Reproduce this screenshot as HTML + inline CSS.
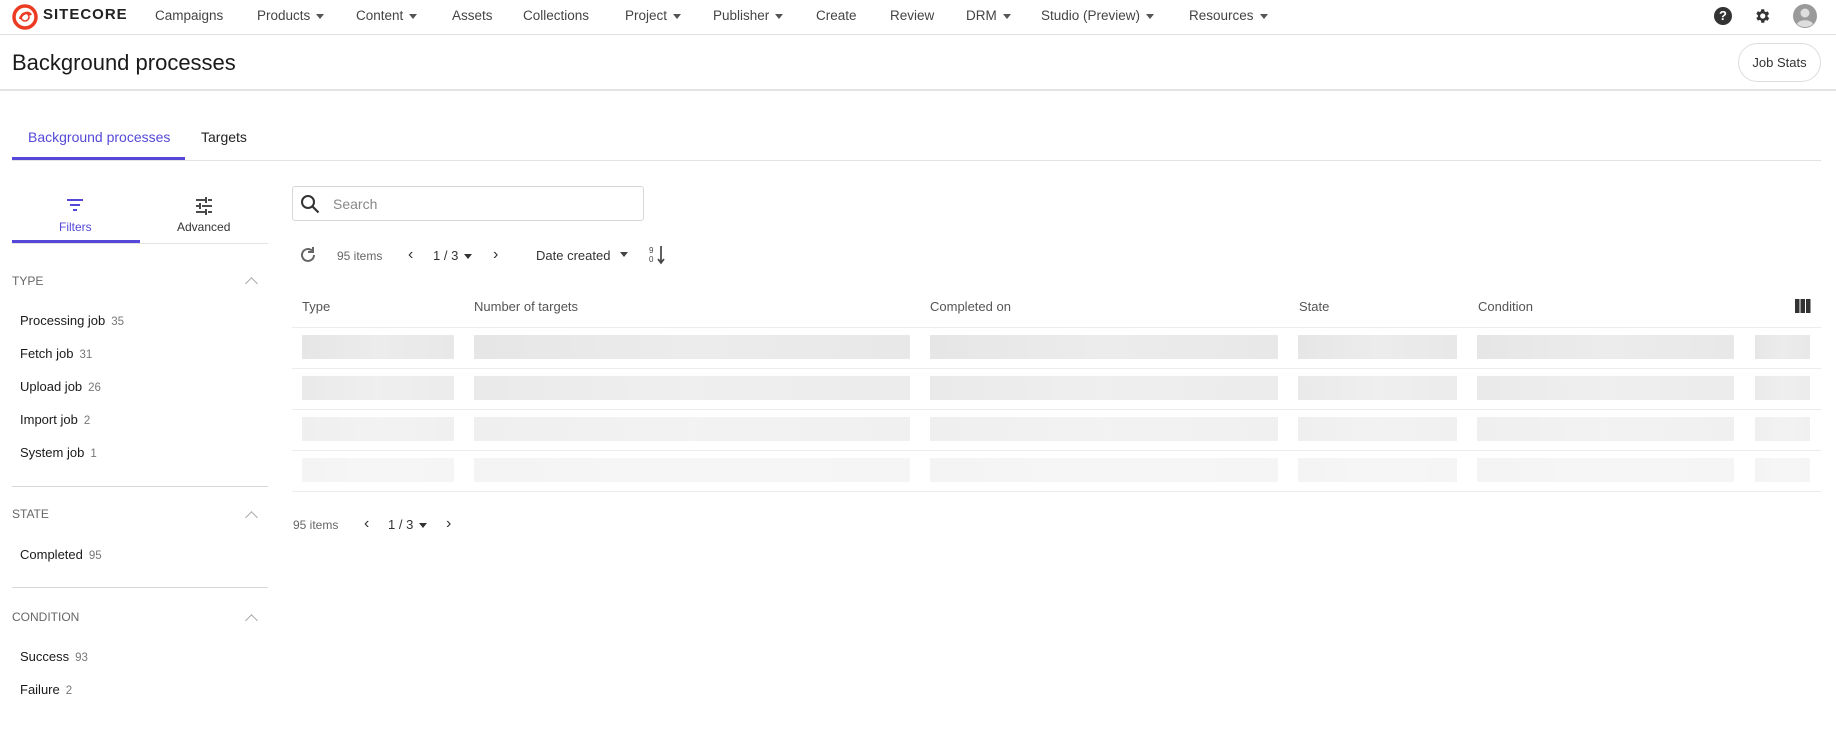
<!DOCTYPE html>
<html><head><meta charset="utf-8"><style>
*{box-sizing:border-box;margin:0;padding:0}
body{width:1836px;height:750px;overflow:hidden;background:#fff;font-family:"Liberation Sans",Arial,sans-serif;color:#222;position:relative}
.a{position:absolute;white-space:nowrap;line-height:20px}
.nav{font-size:13.5px;color:#444}
.car{display:inline-block;width:0;height:0;border-left:4px solid transparent;border-right:4px solid transparent;border-top:5px solid #555;margin-left:6px;vertical-align:middle}
.hl{position:absolute;height:1px;background:#e2e2e2}
.fi{font-size:13px;color:#1a1a1a}
.fi span{font-size:11.5px;color:#777;margin-left:6px}
.sh{font-size:12px;color:#666}
.chev{position:absolute;width:9px;height:9px;border-left:1.5px solid #aaa;border-top:1.5px solid #aaa;transform:rotate(45deg)}
.th{font-size:13px;color:#555}
.bar{position:absolute;height:24px;background:linear-gradient(90deg,#e6e6e6,#ececec 50%,#e8e8e8)}
.sm{font-size:12px;color:#666}
</style></head><body>
<svg style="position:absolute;left:12px;top:4px" width="26" height="26" viewBox="0 0 26 26"><circle cx="13" cy="13" r="11" fill="none" stroke="#eb3c23" stroke-width="3.5"/><path d="M8 15c2-6 8-8 11-4" fill="none" stroke="#eb3c23" stroke-width="2.5"/><circle cx="13" cy="13" r="4" fill="none" stroke="#eb3c23" stroke-width="1.5"/></svg>
<div class="a" style="left:43px;top:5px;font-size:15px;font-weight:bold;letter-spacing:1px;color:#222">SITECORE</div>
<div class="a nav" style="left:155px;top:6px">Campaigns</div>
<div class="a nav" style="left:257px;top:6px">Products<i class="car"></i></div>
<div class="a nav" style="left:356px;top:6px">Content<i class="car"></i></div>
<div class="a nav" style="left:452px;top:6px">Assets</div>
<div class="a nav" style="left:523px;top:6px">Collections</div>
<div class="a nav" style="left:625px;top:6px">Project<i class="car"></i></div>
<div class="a nav" style="left:713px;top:6px">Publisher<i class="car"></i></div>
<div class="a nav" style="left:816px;top:6px">Create</div>
<div class="a nav" style="left:890px;top:6px">Review</div>
<div class="a nav" style="left:966px;top:6px">DRM<i class="car"></i></div>
<div class="a nav" style="left:1041px;top:6px">Studio (Preview)<i class="car"></i></div>
<div class="a nav" style="left:1189px;top:6px">Resources<i class="car"></i></div>
<div style="position:absolute;left:1714px;top:7px;width:18px;height:18px;border-radius:50%;background:#333;color:#fff;font-size:13px;font-weight:bold;text-align:center;line-height:18px">?</div>
<svg style="position:absolute;left:1753px;top:7px" width="18" height="18" viewBox="0 0 24 24"><path fill="#333" d="M19.4 13a7.5 7.5 0 0 0 0-2l2.1-1.6-2-3.5-2.5 1a7 7 0 0 0-1.7-1L15 3h-4l-.4 2.7a7 7 0 0 0-1.7 1l-2.5-1-2 3.5L6.6 11a7.5 7.5 0 0 0 0 2l-2.1 1.6 2 3.5 2.5-1a7 7 0 0 0 1.7 1L11 21h4l.4-2.7a7 7 0 0 0 1.7-1l2.5 1 2-3.5zM13 15.5A3.5 3.5 0 1 1 13 8.5a3.5 3.5 0 0 1 0 7z"/></svg>
<svg style="position:absolute;left:1793px;top:4px" width="24" height="24" viewBox="0 0 24 24"><circle cx="12" cy="12" r="12" fill="#9a9a9a"/><circle cx="12" cy="9" r="4.5" fill="#ddd"/><path d="M4 20c2-5 14-5 16 0a12 12 0 0 1-16 0z" fill="#ddd"/></svg>
<div class="hl" style="left:0;top:34px;width:1836px;background:#e0e0e0"></div>
<div class="a" style="left:12px;top:49px;font-size:22px;line-height:28px;color:#1a1a1a">Background processes</div>
<div style="position:absolute;left:1738px;top:43px;width:83px;height:39px;border:1px solid #ddd;border-radius:20px;font-size:13px;color:#333;text-align:center;line-height:37px">Job Stats</div>
<div style="position:absolute;left:0;top:89px;width:1836px;height:2px;background:#e4e4e4"></div>
<div class="a" style="left:28px;top:127px;font-size:14px;color:#5548d9">Background processes</div>
<div class="a" style="left:201px;top:127px;font-size:14px;color:#222">Targets</div>
<div class="hl" style="left:12px;top:160px;width:1809px"></div>
<div style="position:absolute;left:12px;top:157px;width:173px;height:3px;background:#5548d9"></div>
<svg style="position:absolute;left:66px;top:198px" width="18" height="16" viewBox="0 0 18 16"><path d="M1 2h16M4 7h10M7 12h4" stroke="#5548d9" stroke-width="2"/></svg>
<div class="a" style="left:59px;top:217px;font-size:12px;color:#5548d9">Filters</div>
<svg style="position:absolute;left:195px;top:197px" width="18" height="18" viewBox="0 0 18 18"><path d="M1 3h9M13 3h4M11 0v6M1 9h3M7 9h10M5 6v6M1 15h9M13 15h4M11 12v6" stroke="#333" stroke-width="1.8" fill="none"/></svg>
<div class="a" style="left:177px;top:217px;font-size:12px;color:#333">Advanced</div>
<div class="hl" style="left:12px;top:243px;width:256px"></div>
<div style="position:absolute;left:12px;top:240px;width:128px;height:3px;background:#5548d9"></div>
<div class="a sh" style="left:12px;top:271px">TYPE</div><div class="chev" style="left:247px;top:279px"></div>
<div class="a fi" style="left:20px;top:311px">Processing job<span>35</span></div>
<div class="a fi" style="left:20px;top:344px">Fetch job<span>31</span></div>
<div class="a fi" style="left:20px;top:377px">Upload job<span>26</span></div>
<div class="a fi" style="left:20px;top:410px">Import job<span>2</span></div>
<div class="a fi" style="left:20px;top:443px">System job<span>1</span></div>
<div class="hl" style="left:12px;top:486px;width:256px;background:#d8d8d8"></div>
<div class="a sh" style="left:12px;top:504px">STATE</div><div class="chev" style="left:247px;top:513px"></div>
<div class="a fi" style="left:20px;top:545px">Completed<span>95</span></div>
<div class="hl" style="left:12px;top:587px;width:256px;background:#d8d8d8"></div>
<div class="a sh" style="left:12px;top:607px">CONDITION</div><div class="chev" style="left:247px;top:616px"></div>
<div class="a fi" style="left:20px;top:647px">Success<span>93</span></div>
<div class="a fi" style="left:20px;top:680px">Failure<span>2</span></div>
<div style="position:absolute;left:292px;top:186px;width:352px;height:35px;border:1px solid #d8d8d8;border-radius:3px"></div>
<svg style="position:absolute;left:300px;top:194px" width="20" height="20" viewBox="0 0 20 20"><circle cx="8" cy="8" r="6" fill="none" stroke="#333" stroke-width="2"/><path d="M12.5 12.5l6 6" stroke="#333" stroke-width="2.2"/></svg>
<div class="a" style="left:333px;top:194px;font-size:14px;color:#888">Search</div>
<svg style="position:absolute;left:299px;top:246px" width="18" height="18" viewBox="0 0 18 18"><path d="M15 9a6 6 0 1 1-2-4.5" fill="none" stroke="#666" stroke-width="2"/><path d="M14 1v5h-5" fill="none" stroke="#666" stroke-width="2"/></svg>
<div class="a sm" style="left:337px;top:246px">95 items</div>
<div class="a" style="left:408px;top:245px;font-size:16px;color:#333">‹</div>
<div class="a" style="left:433px;top:246px;font-size:13px;color:#333">1 / 3<i class="car" style="border-top-color:#333"></i></div>
<div class="a" style="left:493px;top:245px;font-size:16px;color:#333">›</div>
<div class="a" style="left:536px;top:246px;font-size:13px;color:#333">Date created</div>
<i class="car" style="position:absolute;left:614px;top:252px;border-top-color:#444"></i>
<svg style="position:absolute;left:649px;top:245px" width="18" height="20" viewBox="0 0 18 20"><text x="0" y="8" font-size="8" font-family="Liberation Sans" fill="#444">9</text><text x="0" y="17" font-size="8" font-family="Liberation Sans" fill="#444">0</text><path d="M12 1v16M9 14l3 4 3-4" fill="none" stroke="#444" stroke-width="1.7"/></svg>
<div class="a th" style="left:302px;top:297px">Type</div>
<div class="a th" style="left:474px;top:297px">Number of targets</div>
<div class="a th" style="left:930px;top:297px">Completed on</div>
<div class="a th" style="left:1299px;top:297px">State</div>
<div class="a th" style="left:1478px;top:297px">Condition</div>
<svg style="position:absolute;left:1795px;top:299px" width="16" height="14"><rect x="0" y="0" width="4.5" height="14" fill="#333"/><rect x="5.5" y="0" width="4.5" height="14" fill="#333"/><rect x="11" y="0" width="4.5" height="14" fill="#333"/></svg>
<div class="hl" style="left:292px;top:327px;width:1529px;background:#ececec"></div>
<div class="hl" style="left:292px;top:368px;width:1529px;background:#ececec"></div>
<div class="hl" style="left:292px;top:409px;width:1529px;background:#ececec"></div>
<div class="hl" style="left:292px;top:450px;width:1529px;background:#ececec"></div>
<div class="hl" style="left:292px;top:491px;width:1529px;background:#ececec"></div>
<div class="a sm" style="left:293px;top:515px">95 items</div>
<div class="a" style="left:364px;top:514px;font-size:16px;color:#333">‹</div>
<div class="a" style="left:388px;top:515px;font-size:13px;color:#333">1 / 3<i class="car" style="border-top-color:#333"></i></div>
<div class="a" style="left:446px;top:514px;font-size:16px;color:#333">›</div>
<style>
.r1{top:335px;opacity:1}.r2{top:376px;opacity:.85}.r3{top:417px;opacity:.65}.r4{top:458px;opacity:.45}
.c1{left:302px;width:152px}.c2{left:474px;width:436px}.c3{left:930px;width:348px}.c4{left:1298px;width:159px}.c5{left:1477px;width:257px}.c6{left:1755px;width:55px}
</style>
<div class="bar r1 c1"></div><div class="bar r1 c2"></div><div class="bar r1 c3"></div><div class="bar r1 c4"></div><div class="bar r1 c5"></div><div class="bar r1 c6"></div>
<div class="bar r2 c1"></div><div class="bar r2 c2"></div><div class="bar r2 c3"></div><div class="bar r2 c4"></div><div class="bar r2 c5"></div><div class="bar r2 c6"></div>
<div class="bar r3 c1"></div><div class="bar r3 c2"></div><div class="bar r3 c3"></div><div class="bar r3 c4"></div><div class="bar r3 c5"></div><div class="bar r3 c6"></div>
<div class="bar r4 c1"></div><div class="bar r4 c2"></div><div class="bar r4 c3"></div><div class="bar r4 c4"></div><div class="bar r4 c5"></div><div class="bar r4 c6"></div>
</body></html>
